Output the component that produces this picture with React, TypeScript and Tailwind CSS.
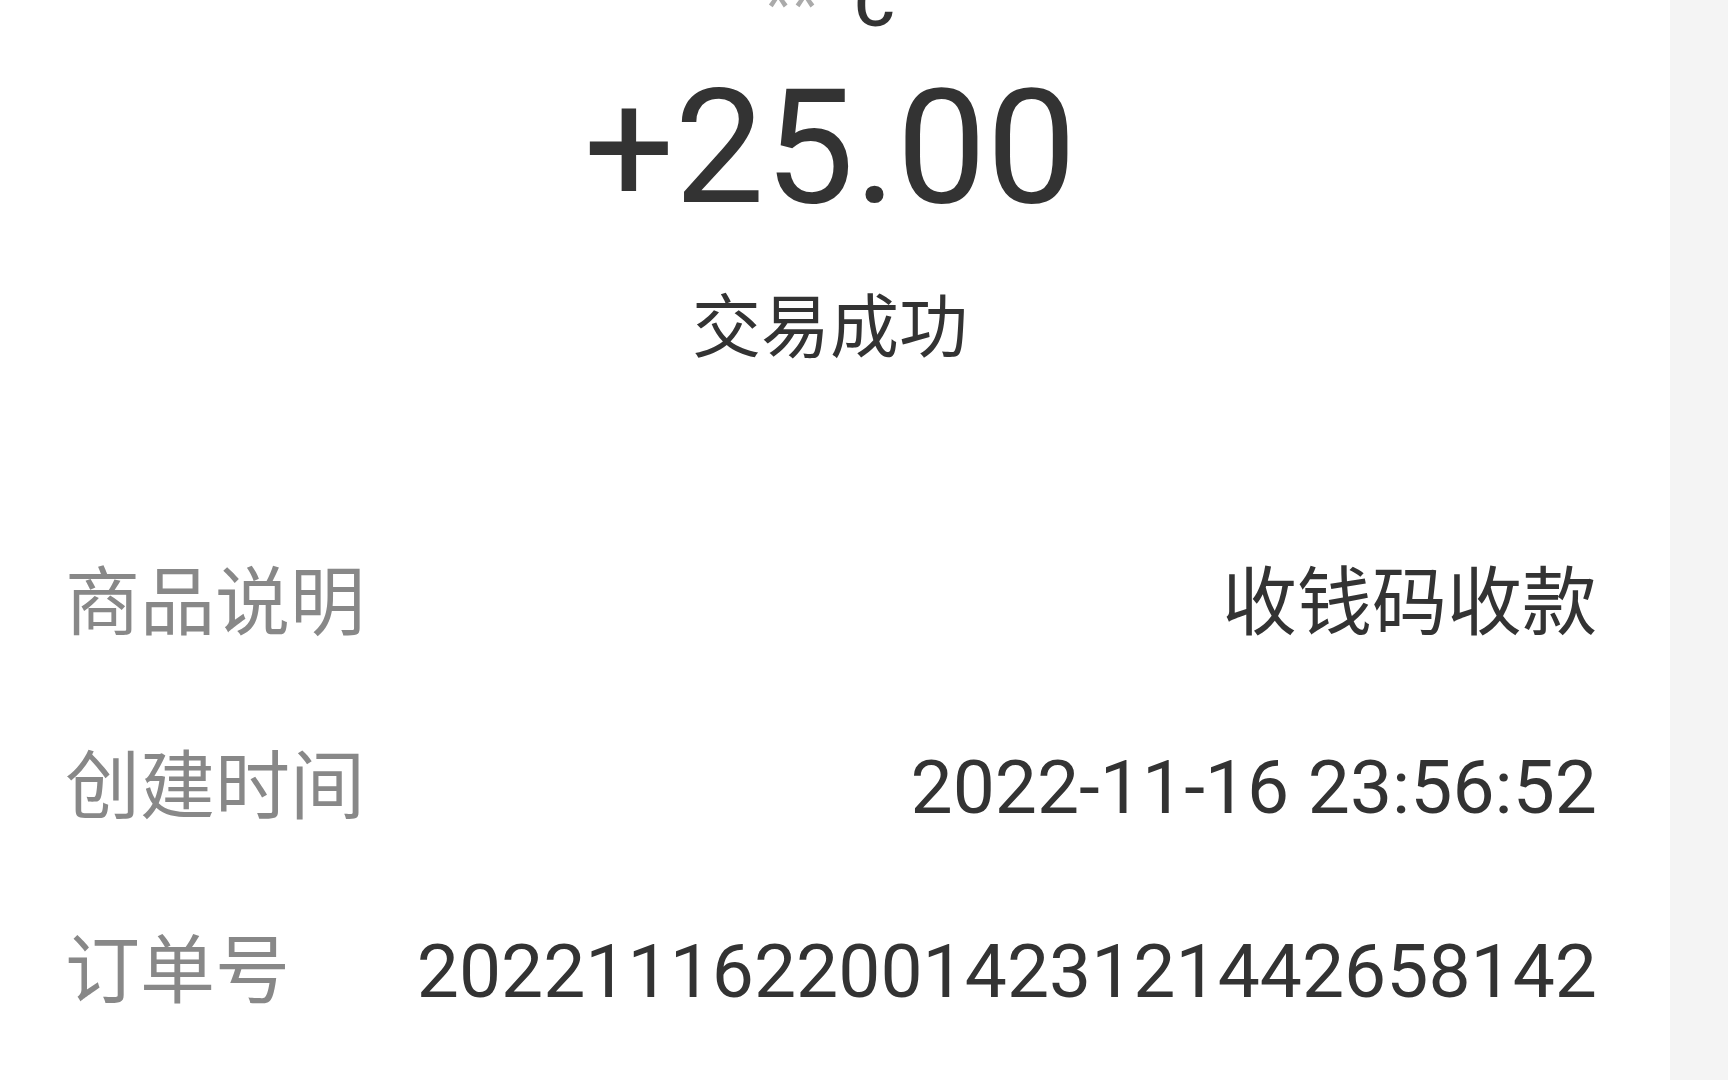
const rows = [
  { label: '商品说明', value: '收钱码收款' },
  { label: '创建时间', value: '2022-11-16 23:56:52' },
  { label: '订单号', value: '2022111622001423121442658142' },
]

export default function App() {
  return (
    <div className="flex h-[1080px] w-full overflow-hidden bg-white font-['Roboto','Noto_Sans_CJK_SC',sans-serif]">
      <div className="flex flex-1 flex-col">
        {/* payer line, scrolled mostly out of view */}
        <div className="flex h-[28px] items-end justify-center overflow-hidden pr-[10px]">
          <span className="flex translate-y-[8px] items-baseline gap-[36px] text-[62px] leading-none">
            <span className="text-[#aaa]">**</span>
            <span className="font-medium text-[#333]">C</span>
          </span>
        </div>

        <div className="mt-[40px] pr-[10px] text-center text-[160px] leading-none text-[#333]">+25.00</div>

        <div className="mt-[66px] pr-[10px] text-center text-[69px] leading-none text-[#333]">交易成功</div>

        <div className="mt-[148px] flex flex-col pl-[65px] pr-[73px]">
          {rows.map((r) => (
            <div key={r.label} className="flex h-[184px] items-center justify-between">
              <span className="text-[75px] leading-none text-[#888]">{r.label}</span>
              <span className="text-[75px] leading-none text-[#333]">{r.value}</span>
            </div>
          ))}
        </div>
      </div>
      <div className="w-[58px] shrink-0 bg-[#f4f4f4]" />
    </div>
  )
}
